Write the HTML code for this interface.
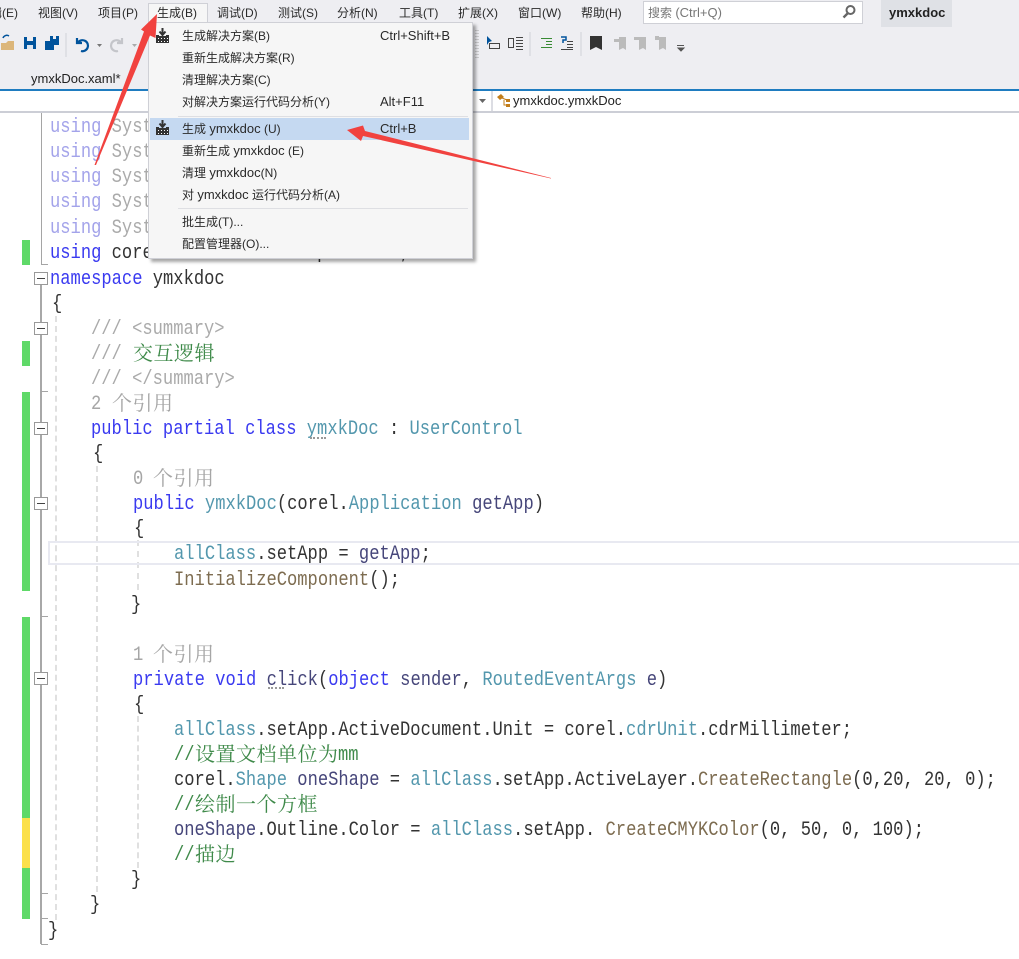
<!DOCTYPE html>
<html><head><meta charset="utf-8"><style>
html,body{margin:0;padding:0;background:#fff}
#p{position:relative;width:1019px;height:959px;overflow:hidden;background:#fff;font-family:"Liberation Sans","Noto Sans CJK SC",sans-serif}
.a{position:absolute}
.l{font-size:13px}
.m{position:absolute;top:5px;font-size:12px;line-height:16px;color:#2a2a2a;white-space:pre}
.i{position:absolute;left:182px;font-size:12px;line-height:16px;color:#2a2a2a;white-space:pre}
.s{position:absolute;left:380px;font-size:13px;line-height:16px;color:#2a2a2a;white-space:pre}
.c{position:absolute;height:26px;line-height:26px;font-family:"Liberation Mono",monospace;font-size:20px;white-space:pre;transform:scaleX(.856);transform-origin:0 0;color:#333}
.z{position:absolute;height:26px;line-height:26px;font-family:"Noto Serif CJK SC","Noto Sans CJK SC",serif;font-size:20px;letter-spacing:.5px;white-space:pre}
.k{color:#3a3af0}.f{color:#a3a3ea}.y{color:#a6a6a6}.t{color:#5397ad}.e{color:#7d6c50}.g{color:#aaa}.n{color:#46467a}
.gb{position:absolute;left:22px;width:8px;background:#5fd968}
.b{position:absolute;left:34px;width:12px;height:11px;background:#fff;border:1px solid #999}
.b:after{content:"";position:absolute;left:2px;top:5px;width:8px;height:1px;background:#444}
.v{position:absolute;width:0;border-left:2px dashed #e0e0e0}
.tk{position:absolute;left:41px;width:7px;height:1px;background:#a5a5a5}
.d{position:absolute;height:2px;border-top:2px dotted #999}
</style></head><body><div id="p">
<div class="a" style="left:0;top:0;width:1019px;height:89px;background:#eeeef2"></div>
<div class="a" style="left:0;top:89px;width:1019px;height:2px;background:#1f7cc0"></div>
<div class="a" style="left:0;top:111px;width:1019px;height:2px;background:#ccced6"></div>
<div class="m" style="left:-10px">辑(E)</div><div class="m" style="left:38px">视图(V)</div><div class="m" style="left:98px">项目(P)</div>
<div class="m" style="left:217px">调试(D)</div><div class="m" style="left:278px">测试(S)</div><div class="m" style="left:337px">分析(N)</div><div class="m" style="left:399px">工具(T)</div><div class="m" style="left:458px">扩展(X)</div><div class="m" style="left:518px">窗口(W)</div><div class="m" style="left:581px">帮助(H)</div>
<div class="a" style="left:643px;top:1px;width:218px;height:21px;background:#fff;border:1px solid #cfd0d6"></div>
<div class="a" style="left:648px;top:5px;font-size:12px;line-height:16px;color:#777">搜索 <span class="l">(Ctrl+Q)</span></div>
<svg class="a" style="left:841px;top:4px" width="16" height="16" viewBox="0 0 16 16"><circle cx="9.5" cy="6" r="4" fill="none" stroke="#666" stroke-width="2"/><path d="M7 9L2.5 13.5" stroke="#666" stroke-width="2.4"/></svg>
<div class="a" style="left:881px;top:0;width:71px;height:27px;background:#dfe1e6"></div>
<div class="a" style="left:889px;top:5px;font-size:13px;font-weight:bold;line-height:16px;color:#222">ymxkdoc</div>
<svg class="a" style="left:0;top:28px" width="150" height="32" viewBox="0 0 150 32">
<path d="M1 15h5l2-2h6v9H1z" fill="#dcb67a"/><path d="M3 10a4 4 0 0 1 6-2" fill="none" stroke="#00539c" stroke-width="1.5"/>
<path d="M24 9h12v12H24z" fill="#00539c"/><path d="M27 9h6v4h-6z" fill="#eeeef2"/><path d="M27 17h6v4h-6z" fill="#dfe6ef"/>
<path d="M45 13h9v9h-9z" fill="#00539c"/><path d="M50 8h9v9h-5v-4h-4z" fill="#00539c"/><path d="M53 8h3v3h-3z" fill="#eeeef2"/>
<path d="M66 5v24" stroke="#d0d1d8"/>
<path d="M77 10v5h5M78 14.500a5.500 5.500 0 1 1 3 8.500" fill="none" stroke="#00539c" stroke-width="2.200"/>
<path d="M97 16h5l-2.500 3z" fill="#777"/>
<path d="M122 10v5h-5M121 14.500a5.500 5.500 0 1 0-3 8.500" fill="none" stroke="#c4c5ca" stroke-width="2.200"/>
<path d="M132 16h5l-2.500 3z" fill="#aaa"/></svg>
<svg class="a" style="left:474px;top:28px" width="220" height="32" viewBox="474 28 220 32">
<path d="M476 30v30M478 30v30" stroke="#aaa" stroke-dasharray="1 2"/>
<path d="M487 36l5 5-3 1-2 3z" fill="#00539c"/><path d="M489.500 43.500h10v5h-10z" fill="none" stroke="#444"/>
<path d="M508.500 38.500h5v9h-5zM516 37.500h7M516 40.500h7M516 43.500h7M516 46.500h7M516 49.500h7" fill="none" stroke="#444" stroke-width="1"/>
<path d="M530 32v24" stroke="#d0d1d8"/>
<path d="M541 38.500h11M546 41.500h6M546 44.500h6M541 47.500h11" stroke="#388a34"/>
<path d="M561 37h5v3h-3v3" fill="none" stroke="#00539c" stroke-width="1.500"/><path d="M567 41.500h6M567 44.500h6M567 47.500h6M561 49.500h12" stroke="#444"/>
<path d="M581 32v24" stroke="#d0d1d8"/>
<path d="M590 36h12v14l-6-3-6 3z" fill="#333"/>
<path d="M619 37h7v13l-3-2-4 2zM614 39h5v3h-5z" fill="#bbb"/><path d="M639 37h7v13l-3-2-4 2zM634 37h6v3h-6z" fill="#bbb"/><path d="M659 37h7v13l-3-2-4 2zM655 36h4v4h-4z" fill="#bbb"/>
<path d="M677 45.500h7M678 48h6l-3 3z" stroke="#555" fill="#555" stroke-width="1"/></svg>
<div class="a" style="left:31px;top:71px;font-size:13px;line-height:16px;color:#222">ymxkDoc.xaml*</div>
<svg class="a" style="left:479px;top:99px" width="8" height="5"><path d="M0 0h7l-3.500 4z" fill="#666"/></svg>
<div class="a" style="left:491px;top:91px;width:2px;height:20px;background:#dcdde3"></div>
<svg class="a" style="left:496px;top:93px" width="16" height="16" viewBox="0 0 16 16"><path d="M1 4l4-3 3 3-4 3zM10 6h4v3h-4zM10 11h4v3h-4z" fill="#c27d1a"/><path d="M6 5l5 2M8 7v5h2" stroke="#c27d1a" fill="none"/></svg>
<div class="a" style="left:513px;top:93px;font-size:13px;line-height:16px;color:#222">ymxkdoc.ymxkDoc</div>

<div class="gb" style="top:240px;height:25px"></div><div class="gb" style="top:341px;height:25px"></div><div class="gb" style="top:392px;height:199px"></div><div class="gb" style="top:617px;height:201px"></div><div class="gb" style="top:818px;height:50px;background:#fbe04a"></div><div class="gb" style="top:868px;height:51px"></div>
<div class="a" style="left:41px;top:113px;width:1px;height:152px;background:#a5a5a5"></div><div class="tk" style="top:264px"></div>
<div class="a" style="left:40px;top:279px;width:2px;height:665px;background:#a8a8a8"></div>
<div class="tk" style="top:391px"></div><div class="tk" style="top:616px"></div><div class="tk" style="top:893px"></div><div class="tk" style="top:918px"></div><div class="tk" style="top:944px"></div>
<div class="b" style="top:272px"></div><div class="b" style="top:322px"></div><div class="b" style="top:422px"></div><div class="b" style="top:497px"></div><div class="b" style="top:672px"></div>
<div class="v" style="left:55px;top:316px;height:604px"></div><div class="v" style="left:96px;top:466px;height:426px"></div><div class="v" style="left:137px;top:540px;height:50px"></div><div class="v" style="left:137px;top:716px;height:152px"></div>
<div class="a" style="left:48px;top:541px;width:971px;height:20px;border:2px solid #e8e9f1;border-right:0"></div>

<div class="c" style="left:50px;top:115px"><span class="f">using</span> <span class="g">System</span></div>
<div class="c" style="left:50px;top:140px"><span class="f">using</span> <span class="g">System</span></div>
<div class="c" style="left:50px;top:165px"><span class="f">using</span> <span class="g">System</span></div>
<div class="c" style="left:50px;top:190px"><span class="f">using</span> <span class="g">System</span></div>
<div class="c" style="left:50px;top:216px"><span class="f">using</span> <span class="g">System</span></div>
<div class="c" style="left:50px;top:241px"><span class="k">using</span> corel = Corel.Interop.VGCore;</div>
<div class="c" style="left:50px;top:267px"><span class="k">namespace</span> ymxkdoc</div>
<div class="c" style="left:52px;top:292px">{</div>
<div class="c" style="left:91px;top:317px;color:#aaa">/// &lt;summary&gt;</div>
<div class="c" style="left:91px;top:342px;color:#aaa">///</div><div class="z" style="left:133px;top:339px;color:#3f8a4a">交互逻辑</div>
<div class="c" style="left:91px;top:367px;color:#aaa">/// &lt;/summary&gt;</div>
<div class="c" style="left:91px;top:392px;color:#a6a6a6">2</div><div class="z" style="left:112px;top:389px;color:#a6a6a6">个引用</div>
<div class="c" style="left:91px;top:417px"><span class="k">public partial class</span> <span class="t">ymxkDoc</span> : <span class="t">UserControl</span></div>
<div class="c" style="left:93px;top:442px">{</div>
<div class="c" style="left:133px;top:467px;color:#a6a6a6">0</div><div class="z" style="left:153px;top:464px;color:#a6a6a6">个引用</div>
<div class="c" style="left:133px;top:492px"><span class="k">public</span> <span class="t">ymxkDoc</span>(corel.<span class="t">Application</span> <span class="n">getApp</span>)</div>
<div class="c" style="left:134px;top:517px">{</div>
<div class="c" style="left:174px;top:542px"><span class="t">allClass</span>.setApp = <span class="n">getApp</span>;</div>
<div class="c" style="left:174px;top:568px"><span class="e">InitializeComponent</span>();</div>
<div class="c" style="left:131px;top:593px">}</div>
<div class="c" style="left:133px;top:643px;color:#a6a6a6">1</div><div class="z" style="left:153px;top:640px;color:#a6a6a6">个引用</div>
<div class="c" style="left:133px;top:668px"><span class="k">private void</span> <span class="n">click</span>(<span class="k">object</span> <span class="n">sender</span>, <span class="t">RoutedEventArgs</span> <span class="n">e</span>)</div>
<div class="c" style="left:134px;top:693px">{</div>
<div class="c" style="left:174px;top:718px"><span class="t">allClass</span>.setApp.ActiveDocument.Unit = corel.<span class="t">cdrUnit</span>.cdrMillimeter;</div>
<div class="c" style="left:174px;top:743px;color:#3f8a4a">//</div><div class="z" style="left:195px;top:740px;color:#3f8a4a">设置文档单位为</div><div class="c" style="left:338px;top:743px;color:#3f8a4a">mm</div>
<div class="c" style="left:174px;top:768px">corel.<span class="t">Shape</span> <span class="n">oneShape</span> = <span class="t">allClass</span>.setApp.ActiveLayer.<span class="e">CreateRectangle</span>(0,20, 20, 0);</div>
<div class="c" style="left:174px;top:793px;color:#3f8a4a">//</div><div class="z" style="left:195px;top:790px;color:#3f8a4a">绘制一个方框</div>
<div class="c" style="left:174px;top:818px"><span class="n">oneShape</span>.Outline.Color = <span class="t">allClass</span>.setApp. <span class="e">CreateCMYKColor</span>(0, 50, 0, 100);</div>
<div class="c" style="left:174px;top:843px;color:#3f8a4a">//</div><div class="z" style="left:195px;top:840px;color:#3f8a4a">描边</div>
<div class="c" style="left:131px;top:868px">}</div>
<div class="c" style="left:90px;top:893px">}</div>
<div class="c" style="left:48px;top:919px">}</div>
<div class="d" style="left:310px;top:437px;width:16px"></div><div class="d" style="left:268px;top:687px;width:16px"></div>

<div class="a" style="left:148px;top:3px;width:58px;height:19px;background:#f6f6f6;border:1px solid #cfd0d6;border-bottom:0"></div>
<div class="m" style="left:157px">生成(B)</div>
<div class="a" style="left:148px;top:22px;width:323px;height:235px;background:#f6f6f6;border:1px solid #cfd0d6;box-shadow:3px 3px 3px rgba(0,0,0,.35)"></div>
<div class="a" style="left:150px;top:118px;width:319px;height:22px;background:#c5d9f1"></div>
<div class="a" style="left:178px;top:116px;width:290px;height:1px;background:#dedfe3"></div>
<div class="a" style="left:178px;top:208px;width:290px;height:1px;background:#dedfe3"></div>
<svg class="a" style="left:155px;top:28px" width="15" height="16" viewBox="0 0 15 16"><path d="M7.500 0v6M4.500 3.500l3 3.500 3-3.500" fill="none" stroke="#333" stroke-width="2"/><path d="M1 7h3v1h7V7h3v8H1z" fill="#333"/><path d="M3 10h1v1H3zM6 10h1v1H6zM9 10h1v1H9zM12 10h1v1h-1zM3 13h1v1H3zM6 13h1v1H6zM9 13h1v1H9zM12 13h1v1h-1z" fill="#fff"/></svg>
<svg class="a" style="left:155px;top:120px" width="15" height="16" viewBox="0 0 15 16"><path d="M7.500 0v6M4.500 3.500l3 3.500 3-3.500" fill="none" stroke="#333" stroke-width="2"/><path d="M1 7h3v1h7V7h3v8H1z" fill="#333"/><path d="M3 10h1v1H3zM6 10h1v1H6zM9 10h1v1H9zM12 10h1v1h-1zM3 13h1v1H3zM6 13h1v1H6zM9 13h1v1H9zM12 13h1v1h-1z" fill="#fff"/></svg>
<div class="i" style="top:28px">生成解决方案(B)</div><div class="s" style="top:28px">Ctrl+Shift+B</div>
<div class="i" style="top:50px">重新生成解决方案(R)</div>
<div class="i" style="top:72px">清理解决方案(C)</div>
<div class="i" style="top:94px">对解决方案运行代码分析(Y)</div><div class="s" style="top:94px">Alt+F11</div>
<div class="i" style="top:121px">生成 <span class="l">ymxkdoc</span> (U)</div><div class="s" style="top:121px">Ctrl+B</div>
<div class="i" style="top:143px">重新生成 <span class="l">ymxkdoc</span> (E)</div>
<div class="i" style="top:165px">清理 <span class="l">ymxkdoc</span>(N)</div>
<div class="i" style="top:187px">对 <span class="l">ymxkdoc</span> 运行代码分析(A)</div>
<div class="i" style="top:214px">批生成(T)...</div>
<div class="i" style="top:236px">配置管理器(O)...</div>
<svg class="a" style="left:0;top:0" width="1019" height="959"><path d="M157 14L155.500 38L150 35.500L96 165L94.500 165L144 31.500L141 29.500Z" fill="#f1423f"/><path d="M347 130L363 125.500L365 131L551 178L551 178.500L363 136L361 141Z" fill="#f1423f"/></svg>
</div></body></html>
